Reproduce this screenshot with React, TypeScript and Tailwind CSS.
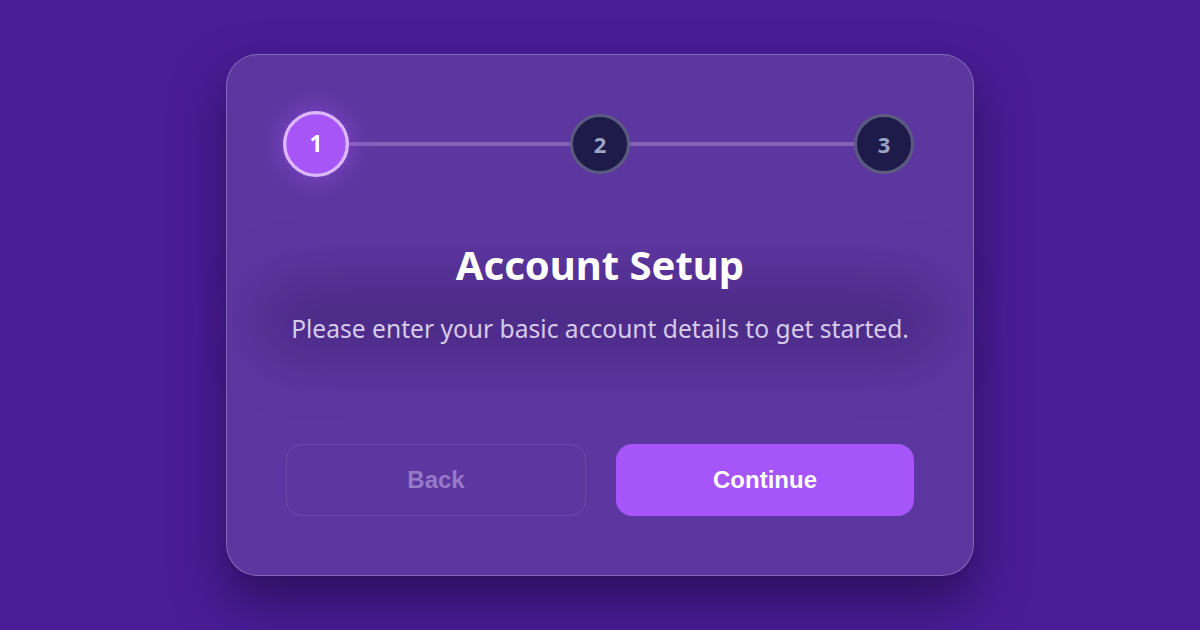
import React from "react";

const steps = [1, 2, 3];

function Stepper() {
  return (
    <div className="relative flex items-center justify-between">
      <div className="absolute left-[30px] right-[30px] top-1/2 h-[4px] -translate-y-1/2 bg-[#8462b8]" />
      {steps.map((n) =>
        n === 1 ? (
          <div
            key={n}
            className="relative z-10 flex h-[60px] w-[60px] scale-110 items-center justify-center rounded-full border-[3px] border-[#dcb8fd] bg-[#a855f7] text-[21px] font-bold text-white shadow-[0_0_24px_rgba(168,85,247,0.55)]"
          >
            {n}
          </div>
        ) : (
          <div
            key={n}
            className="relative z-10 flex h-[60px] w-[60px] items-center justify-center rounded-full border-[3px] border-[#5b5b80] bg-[#1e1b4b] text-[22px] font-bold text-[#9aa6c4]"
          >
            {n}
          </div>
        )
      )}
    </div>
  );
}

export default function App() {
  return (
    <div
      className="flex h-[630px] w-[1200px] items-center justify-center bg-[#4a1d96]"
      style={{ fontFamily: '"Noto Sans", "Open Sans", sans-serif' }}
    >
      <div className="w-[748px] rounded-[32px] border border-white/25 bg-[#5d37a0] p-[59px] shadow-[0_25px_50px_rgba(20,5,50,0.55)]">
        <Stepper />

        <div className="relative mt-[67px] text-center">
          {/* soft dark haze behind the copy */}
          <div className="absolute left-[-30px] right-[-30px] top-[38px] h-[80px] rounded-full bg-[rgba(45,20,90,0.36)] blur-[28px]" />
          <h1 className="relative text-[40px] font-bold leading-[48px] text-white">Account Setup</h1>
          <p className="relative mt-[24px] text-[24.6px] leading-[32px] text-[#d6cbe9]">
            Please enter your basic account details to get started.
          </p>
        </div>

        <div
          className="mt-[99px] flex gap-[30px]"
          style={{ fontFamily: '"Liberation Sans", Arial, sans-serif' }}
        >
          <button className="h-[72px] flex-1 rounded-[16px] border border-white/10 text-[24px] font-bold text-[#9878c8]">
            Back
          </button>
          <button className="h-[72px] flex-1 rounded-[16px] bg-[#a555f8] text-[24px] font-bold text-white">
            Continue
          </button>
        </div>
      </div>
    </div>
  );
}
